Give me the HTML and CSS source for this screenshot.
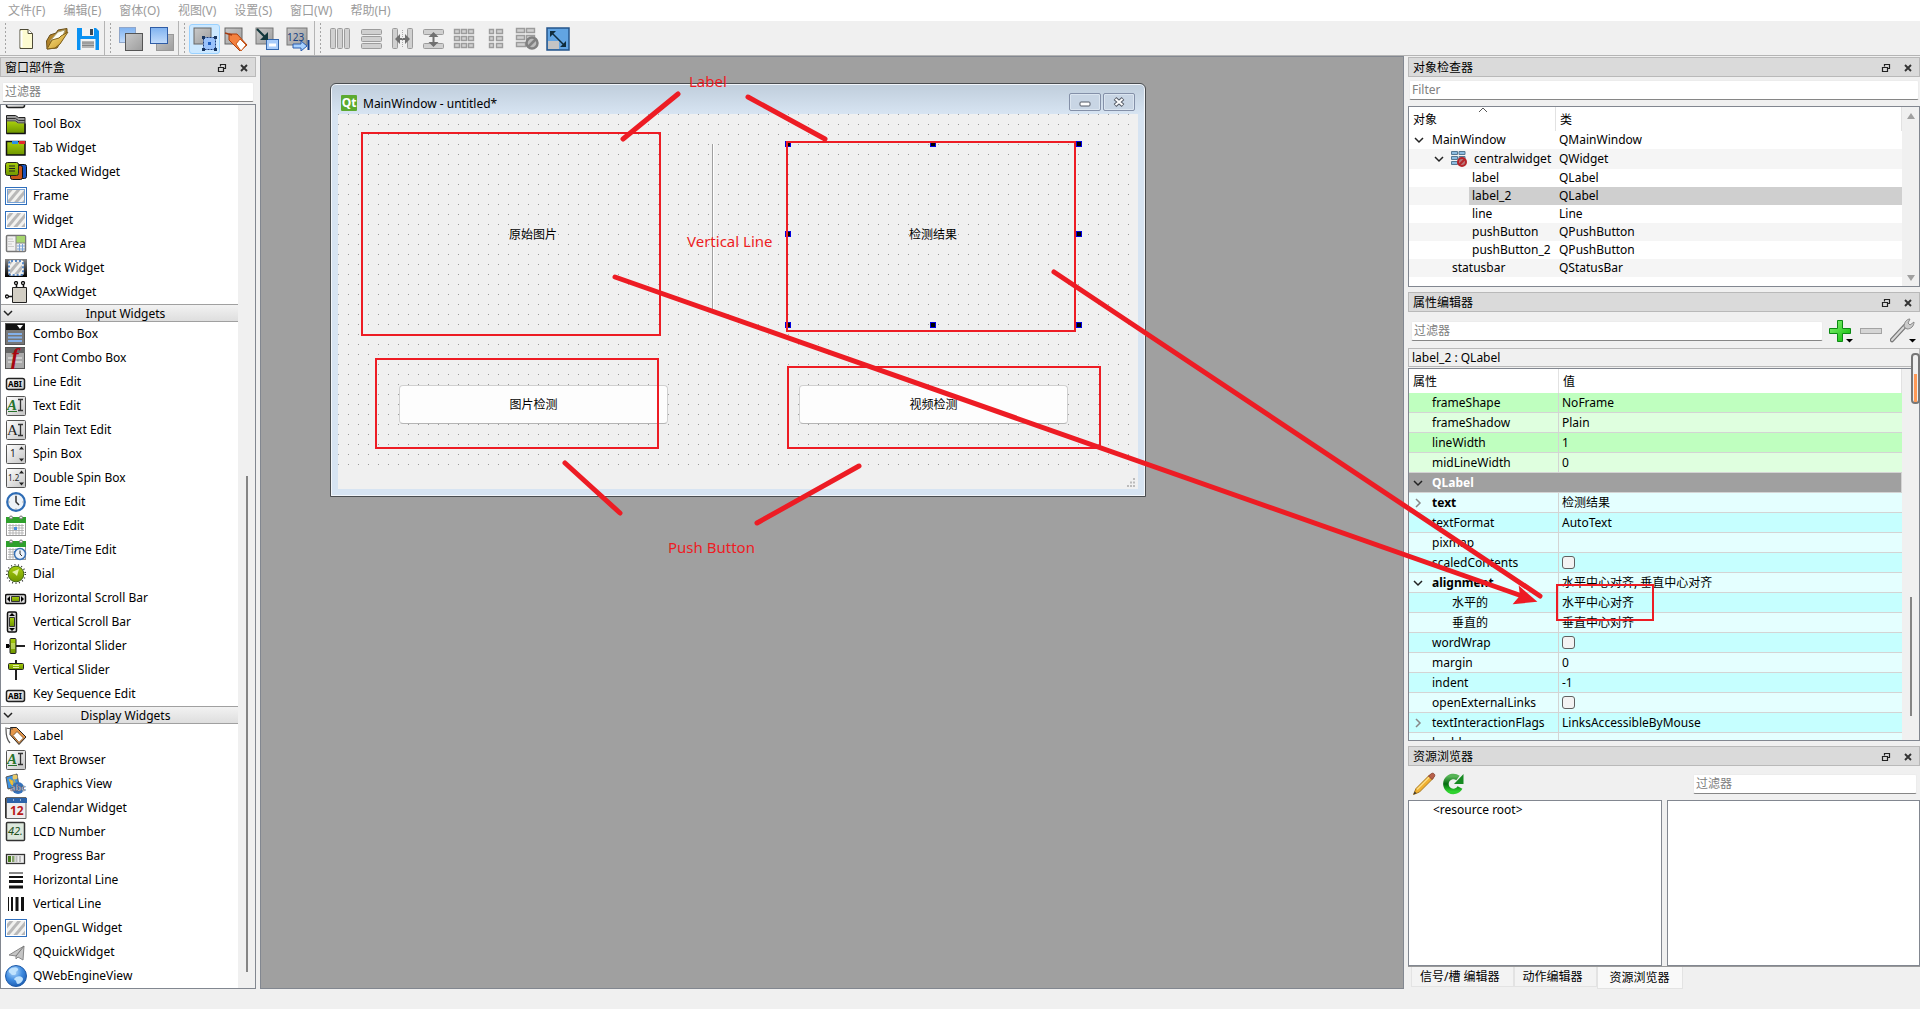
FILE: index.html
```html
<!DOCTYPE html>
<html lang="zh-CN">
<head>
  <meta charset="UTF-8" />
  <meta name="viewport" content="width=device-width, initial-scale=1.0"/>
  <title>Qt Designer</title>
  <link rel="stylesheet" href="styles.css">
</head>
<body>
  <!-- shared gradients -->
  <svg class="gradients" aria-hidden="true">
    <defs>
      <linearGradient id="g-green" x1="0" y1="0" x2="0" y2="1"><stop offset="0" stop-color="#a8ce0c"/><stop offset="1" stop-color="#6f9600"/></linearGradient>
      <linearGradient id="g-grey" x1="0" y1="0" x2="1" y2="1"><stop offset="0" stop-color="#c9c9c9"/><stop offset="1" stop-color="#9d9d9d"/></linearGradient>
      <linearGradient id="g-light" x1="0" y1="0" x2="1" y2="1"><stop offset="0" stop-color="#ffffff"/><stop offset="1" stop-color="#c4c4c4"/></linearGradient>
      <linearGradient id="g-blue" x1="0" y1="0" x2="0" y2="1"><stop offset="0" stop-color="#7fb2f0"/><stop offset="1" stop-color="#c3dcfb"/></linearGradient>
      <linearGradient id="g-plus" x1="0" y1="0" x2="1" y2="1"><stop offset="0" stop-color="#8df57a"/><stop offset="1" stop-color="#05b800"/></linearGradient>
      <linearGradient id="g-dark" x1="0" y1="0" x2="0" y2="1"><stop offset="0" stop-color="#888"/><stop offset="1" stop-color="#000"/></linearGradient>
      <linearGradient id="g-folder" x1="0" y1="0" x2="1" y2="1"><stop offset="0" stop-color="#fae48c"/><stop offset="1" stop-color="#c9951f"/></linearGradient>
      <linearGradient id="g-refresh" x1="0" y1="0" x2="0" y2="1"><stop offset="0" stop-color="#56b356"/><stop offset="0.5" stop-color="#056b10"/><stop offset="1" stop-color="#2fd22f"/></linearGradient>
      <radialGradient id="g-globe" cx="0.4" cy="0.3" r="0.8"><stop offset="0" stop-color="#b9defc"/><stop offset="0.5" stop-color="#3f8be0"/><stop offset="1" stop-color="#1553a8"/></radialGradient>
      <pattern id="p-stripe" width="6" height="6" patternUnits="userSpaceOnUse" patternTransform="rotate(40)"><rect width="6" height="6" fill="#f1f1ef"/><rect width="3" height="6" fill="#b8b8b8"/></pattern>
    </defs>
  </svg>

  <!-- icon sprite -->
  <svg class="sprite" aria-hidden="true">
    <symbol id="i-float" viewBox="0 0 10 10"><path d="M3.5 3.5v-2h5v4h-2M3 1.5h6M1.5 4.500h5v4h-5zM1 4.500h6" fill="none" stroke="#222" stroke-width="1.200"/></symbol>
    <symbol id="i-close" viewBox="0 0 10 10"><path d="M2 2l6 6M8 2l-6 6" stroke="#333" stroke-width="1.900"/></symbol>
    <symbol id="i-down" viewBox="0 0 10 10"><path d="M1 3l4 4 4-4" fill="none" stroke="#222" stroke-width="1.500"/></symbol>
    <symbol id="i-right" viewBox="0 0 10 10"><path d="M3 1l4 4-4 4" fill="none" stroke="#888" stroke-width="1.500"/></symbol>

    <symbol id="t-new" viewBox="0 0 24 24"><path d="M6 2.500h8l4.500 4v15H6z" fill="#fdfbd0" stroke="#4d4a36"/><path d="M14 2.500v4h4.500" fill="#fff" stroke="#4d4a36"/><path d="M7.500 4v16" stroke="#fff" stroke-width="2"/></symbol>
    <symbol id="t-open" viewBox="0 0 24 24"><path d="M1.500 14L5 8l6-2 2-3 9-1.500V5L12 21l-10 1z" fill="#b08228" stroke="#69501c"/><path d="M5 14L13 5l7-2-3 9z" fill="#fdfdf2" stroke="#aaa27a"/><path d="M2 22l5-9 7-2 2-2 7-4-8 12-5 4z" fill="url(#g-folder)" stroke="#80601b"/></symbol>
    <symbol id="t-save" viewBox="0 0 24 24"><path d="M1 1h19l3 3v19H1z" fill="#0a91f2"/><path d="M6 1h12v8H6zM4.500 12h15v11h-15z" fill="#f3f3f3"/><path d="M14 2h3v6h-3z" fill="#3b4854"/><path d="M6 14h12v7H6z" fill="#b5b5b5"/><path d="M6 16h12M6 18.500h12" stroke="#858585"/></symbol>
    <symbol id="t-back" viewBox="0 0 24 24"><rect x=".5" y=".5" width="16" height="15" fill="url(#g-blue)" stroke="#8fa6ca"/><rect x="6.500" y="6.500" width="17" height="17" fill="url(#g-grey)" stroke="#555"/></symbol>
    <symbol id="t-front" viewBox="0 0 24 24"><rect x="6.500" y="7.500" width="17" height="16" fill="url(#g-grey)" stroke="#999"/><rect x=".5" y=".5" width="17" height="16" fill="url(#g-blue)" stroke="#2f5ca5"/></symbol>
    <symbol id="t-edit" viewBox="0 0 24 24"><rect x="1" y="1" width="17" height="16" fill="url(#g-grey)" stroke="#666"/><rect x="10.500" y="10.500" width="12" height="12" fill="#9ac2fb" stroke="#1c3d7d" stroke-dasharray="2 1"/><path d="M9 9h3v3H9zM21 9h3v3h-3zM9 21h3v3H9zM21 21h3v3h-3z" fill="#18355f"/><path d="M15 15h3v3h-3z" fill="#1d5dbf"/></symbol>
    <symbol id="t-tag" viewBox="0 0 24 24"><rect x="1" y="1" width="17" height="16" fill="url(#g-grey)" stroke="#666"/><path d="M5 7h8l10 11-7 6L5 13z" fill="#f3813f" stroke="#b13e0b"/><path d="M16 12l6 6-5 6-5-7z" fill="#fff" stroke="#c85a1c"/><path d="M1 6l7 2" stroke="#a23a10" stroke-width="1.500"/></symbol>
    <symbol id="t-buddy" viewBox="0 0 24 24"><rect x="1" y="1" width="17" height="16" fill="url(#g-grey)" stroke="#777"/><rect x="11.500" y="12.500" width="12" height="10" fill="#a8ccfa" stroke="#3366ab"/><path d="M14 18h7" stroke="#fff" stroke-width="3"/><path d="M2 2l9 9" stroke="#12373c" stroke-width="2.200"/><path d="M13 5v8H5z" fill="#12373c"/></symbol>
    <symbol id="t-order" viewBox="0 0 24 24"><rect x="1" y="1" width="20" height="17" fill="url(#g-grey)" stroke="#777"/><text x="1" y="14" font-size="10" fill="#173f82">123</text><path d="M7 17h8v-3l6 5-6 5v-3H7z" fill="#a8d1ff" stroke="#2a5caf"/><path d="M22.500 13v10" stroke="#153f8b" stroke-width="2"/></symbol>
    <symbol id="t-hlay" viewBox="0 0 24 24"><g fill="#d0d0d0" stroke="#9c9c9c"><rect x="1.500" y="1.500" width="5" height="20" rx="1"/><rect x="8.500" y="1.500" width="5" height="20" rx="1"/><rect x="15.500" y="1.500" width="5" height="20" rx="1"/></g></symbol>
    <symbol id="t-vlay" viewBox="0 0 24 24"><g fill="#d0d0d0" stroke="#9c9c9c"><rect x="1.500" y="2.500" width="20" height="5" rx="1"/><rect x="1.500" y="9.500" width="20" height="5" rx="1"/><rect x="1.500" y="16.500" width="20" height="5" rx="1"/></g></symbol>
    <symbol id="t-hsplit" viewBox="0 0 24 24"><g fill="#d0d0d0" stroke="#9c9c9c"><rect x="1.500" y="1.500" width="5" height="20" rx="1"/><rect x="16.500" y="1.500" width="5" height="20" rx="1"/></g><path d="M4 12l5-5v4h5V7l5 5-5 5v-4H9v4z" fill="#707070"/><path d="M11.500 3v18" stroke="#aaa" stroke-dasharray="1 1"/></symbol>
    <symbol id="t-vsplit" viewBox="0 0 24 24"><g fill="#d0d0d0" stroke="#9c9c9c"><rect x="1.500" y="2.500" width="20" height="5" rx="1"/><rect x="1.500" y="16.500" width="20" height="5" rx="1"/></g><path d="M11.500 5l5 5h-4v5h4l-5 5-5-5h4v-5h-4z" fill="#707070"/></symbol>
    <symbol id="t-grid" viewBox="0 0 24 24"><path d="M1.500 2.500h5v4h-5zM8.500 2.500h5v4h-5zM15.500 2.500h5v4h-5zM1.500 9.500h5v4h-5zM8.500 9.500h5v4h-5zM15.500 9.500h5v4h-5zM1.500 16.500h5v4h-5zM8.500 16.500h5v4h-5zM15.500 16.500h5v4h-5z" fill="#d0d0d0" stroke="#9c9c9c" stroke-width="1.400"/></symbol>
    <symbol id="t-form" viewBox="0 0 24 24"><path d="M5.500 2.500h4v4h-4zM12.500 2.500h6v4h-6zM5.500 9.500h4v4h-4zM12.500 9.500h6v4h-6zM5.500 16.500h4v4h-4zM12.500 16.500h6v4h-6z" fill="#d0d0d0" stroke="#9c9c9c" stroke-width="1.400"/></symbol>
    <symbol id="t-break" viewBox="0 0 24 24"><path d="M1.500 1.500h8v4h-8zM11.500 1.500h8v4h-8zM1.500 8.500h8v4h-8zM11.500 8.500h8v4h-8zM1.500 15.500h9v4h-9z" fill="#d0d0d0" stroke="#9c9c9c" stroke-width="1.400"/><circle cx="17" cy="16" r="5.500" fill="#bbb" stroke="#808080" stroke-width="2.500"/><path d="M13 20l8-8" stroke="#808080" stroke-width="2.500"/></symbol>
    <symbol id="t-adjust" viewBox="0 0 24 24"><rect x="1" y="1" width="22" height="22" fill="#62a4e2" stroke="#24548a" stroke-width="1.500"/><rect x="2" y="14" width="11" height="8" fill="#c4c4c4"/><path d="M6 6l12 12" stroke="#102c3c" stroke-width="1.500"/><path d="M4 4h6l-6 6zM20 20h-6l6-6z" fill="#102c3c"/></symbol>

    <symbol id="w-frame" viewBox="0 0 22 22"><rect x=".5" y="2.500" width="21" height="17" fill="#fff" stroke="#2f6fbd"/><rect x="2.500" y="4.500" width="17" height="13" fill="url(#p-stripe)" stroke="#7aa3d4"/></symbol>
    <symbol id="w-widget" viewBox="0 0 22 22"><rect x=".5" y="2.500" width="21" height="17" fill="#fff" stroke="#2f6fbd"/><rect x="2" y="4" width="18" height="14" fill="url(#p-stripe)"/></symbol>
    <symbol id="w-toolbox" viewBox="0 0 22 22"><path d="M1.500 2.500h9l3 2h6.500v16H1.500z" fill="#999" stroke="#222"/><path d="M1.500 5.500h9l3 2H20M1.500 8h9l3 2H20" fill="none" stroke="#333"/><path d="M2 8.500h8l3 2h6.500V20H2z" fill="url(#g-green)"/><path d="M1.500 20.500H20v-10" fill="none" stroke="#111" stroke-width="1.500"/></symbol>
    <symbol id="w-tab" viewBox="0 0 22 22"><path d="M1.500 4.500H20v13.500H1.500z" fill="url(#g-green)" stroke="#111" stroke-width="1.500"/><path d="M7 4h6v3H7z" fill="#2a91e8"/><path d="M14 4h6v3h-6z" fill="#e3272c"/></symbol>
    <symbol id="w-stack" viewBox="0 0 22 22"><rect x="9.500" y="3.500" width="12" height="14" rx="2" fill="#1853c1" stroke="#111"/><rect x="5.500" y="4.500" width="12" height="14" rx="2" fill="#c5551a" stroke="#111"/><rect x=".5" y="1.500" width="13" height="13" rx="2" fill="url(#g-green)" stroke="#222"/><path d="M4 5h6M4 7.500h6M4 10h6" stroke="#222"/></symbol>
    <symbol id="w-mdi" viewBox="0 0 22 22"><rect x="1.500" y="2.500" width="19" height="16" rx="1" fill="#f2f2f2" stroke="#777" stroke-width="1.500"/><path d="M11 3h9v7h-9z" fill="#a6d56e"/><path d="M11 3v15M11 10h9" stroke="#888"/><path d="M3 6h5M3 8.500h6M3 11h4M3 13.500h6" stroke="#ccc"/><path d="M12 13h8M12 16h8M14.500 11v7M17.500 11v7" stroke="#7ba3d6"/></symbol>
    <symbol id="w-dock" viewBox="0 0 22 22"><rect y="2" width="22" height="18" fill="url(#g-dark)"/><rect x="4" y="4" width="14" height="14" rx="2" fill="url(#p-stripe)" stroke="#fff" stroke-width="1.500"/><rect x="4" y="4" width="14" height="14" rx="2" fill="none" stroke="#2a6abb" stroke-width="1.500" stroke-dasharray="2 2"/></symbol>
    <symbol id="w-ax" viewBox="0 0 22 22"><path d="M7.500 6.500h14v15h-14z" fill="#d2cec4" stroke="#222"/><path d="M11.500 6V3M18.500 6V3M7 15.500H4" stroke="#111" stroke-width="1.500"/><g fill="#fff" stroke="#111" stroke-width="1.300"><circle cx="11" cy="2" r="1.500"/><circle cx="18" cy="2" r="1.500"/><circle cx="2" cy="15.500" r="1.500"/></g></symbol>
    <symbol id="w-combo" viewBox="0 0 22 22"><rect x=".5" y=".5" width="19" height="21" fill="#777" stroke="#555"/><path d="M1 1h19v6H1z" fill="#111"/><path d="M12 2h6l-3 4z" fill="#fff"/><path d="M3 11h14M3 14.500h14M3 18h14" stroke="#83b0ea" stroke-width="2"/></symbol>
    <symbol id="w-font" viewBox="0 0 22 22"><rect x=".5" y=".5" width="19" height="21" fill="#aaa" stroke="#555"/><path d="M1 1h19v5H1z" fill="#666"/><path d="M3 11h14M3 15h14" stroke="#ccc" stroke-width="2"/><text x="6" y="17" font-family="Liberation Serif" font-style="italic" font-weight="bold" font-size="23" fill="#a80710">f</text></symbol>
    <symbol id="w-line" viewBox="0 0 22 22"><rect x="1.500" y="7.500" width="18" height="11" rx="2" fill="url(#g-light)" stroke="#222" stroke-width="1.500"/><text x="3" y="16" font-size="8" font-weight="bold">ABI</text></symbol>
    <symbol id="w-text" viewBox="0 0 22 22"><rect x="1.500" y="1.500" width="19" height="19" rx="1" fill="url(#g-light)" stroke="#555"/><text x="2" y="15" font-family="Liberation Serif" font-size="15" font-style="italic" font-weight="bold" fill="#27722c">A</text><path d="M3 16.500h9" stroke="#27722c"/><path d="M13 4.500h5M13 15.500h5M15.500 5v10" stroke="#333" stroke-width="1.300"/></symbol>
    <symbol id="w-plain" viewBox="0 0 22 22"><rect x="1.500" y="1.500" width="19" height="19" rx="1" fill="url(#g-light)" stroke="#555"/><text x="2" y="16" font-family="Liberation Serif" font-size="15" fill="#222">A</text><path d="M13 5.500h5M13 16.500h5M15.500 6v10" stroke="#333" stroke-width="1.300"/></symbol>
    <symbol id="w-spin" viewBox="0 0 22 22"><rect x="1.500" y="1.500" width="19" height="19" rx="1" fill="url(#g-light)" stroke="#555"/><text x="5" y="14" font-size="10" fill="#222">1</text><path d="M14 6.500l2.500-3 2.500 3zM14 15.500l2.500 3 2.500-3z" fill="#222"/></symbol>
    <symbol id="w-dspin" viewBox="0 0 22 22"><rect x="1.500" y="1.500" width="19" height="19" rx="1" fill="url(#g-light)" stroke="#555"/><text x="3" y="14" font-size="8" fill="#222">1.2</text><path d="M14 6.500l2.500-3 2.500 3zM14 15.500l2.500 3 2.500-3z" fill="#222"/></symbol>
    <symbol id="w-time" viewBox="0 0 22 22"><circle cx="11" cy="11" r="8.800" fill="#eef3f8" stroke="#2e6cb5" stroke-width="2.200"/><path d="M11 5v6l3 3" fill="none" stroke="#333" stroke-width="1.500"/><path d="M11 3.500v1M11 17.500v1M3.500 11h1M17.500 11h1" stroke="#777"/></symbol>
    <symbol id="w-date" viewBox="0 0 22 22"><rect x="1.500" y="3.500" width="19" height="17" fill="#fff" stroke="#999"/><path d="M1 2h20v6H1z" fill="#2fa02c"/><g fill="#eee" stroke="#777"><circle cx="6" cy="2.500" r="1.500"/><circle cx="16" cy="2.500" r="1.500"/></g><path d="M3 10.500h16M3 13h16M3 15.500h16M3 18h16M5 9v11M8 9v11M11 9v11M14 9v11M17 9v11" stroke="#aaa" stroke-width=".8"/><path d="M9 12h3v3H9z" fill="#4c8fe0"/></symbol>
    <symbol id="w-datetime" viewBox="0 0 22 22"><use href="#w-date"/><circle cx="15" cy="15" r="5.500" fill="#edf3fa" stroke="#3a72b5" stroke-width="1.500"/><path d="M15 11.500V15l2 2" fill="none" stroke="#333"/></symbol>
    <symbol id="w-dial" viewBox="0 0 22 22"><circle cx="11" cy="11" r="9.300" fill="none" stroke="#333" stroke-width="1.500" stroke-dasharray="1 2.500"/><circle cx="11" cy="11" r="7.800" fill="url(#g-green)" stroke="#446a12"/><path d="M7 9l7-3-2 7-2-2z" fill="#e3f2a4"/></symbol>
    <symbol id="w-hscroll" viewBox="0 0 22 22"><rect x=".5" y="7.500" width="20" height="9" rx="1.500" fill="#ddd" stroke="#111" stroke-width="1.500"/><path d="M5 9v6l-3-3zM16 9v6l3-3z"/><path d="M6.500 9.500h8v5h-8z" fill="url(#g-green)" stroke="#333"/></symbol>
    <symbol id="w-vscroll" viewBox="0 0 22 22"><rect x="2.500" y="1" width="9" height="20" rx="1.500" fill="#ddd" stroke="#111" stroke-width="1.500"/><path d="M4 5h6L7 2zM4 17h6l-3 3z"/><path d="M4.500 6.500h5v9h-5z" fill="url(#g-green)" stroke="#333"/></symbol>
    <symbol id="w-hslider" viewBox="0 0 22 22"><path d="M1 11h19" stroke="#222" stroke-width="2"/><path d="M1 9h3v4H1z"/><rect x="5" y="3.500" width="6" height="15" rx="1" fill="url(#g-green)" stroke="#222"/><path d="M7 8v6M9 8v6" stroke="#e3f2a4"/></symbol>
    <symbol id="w-vslider" viewBox="0 0 22 22"><path d="M11 1v20" stroke="#222" stroke-width="2"/><rect x="3.500" y="4.500" width="15" height="6" rx="1" fill="url(#g-green)" stroke="#222"/><path d="M8 6.500h6M8 8.500h6" stroke="#e3f2a4"/></symbol>
    <symbol id="w-label" viewBox="0 0 22 22"><path d="M5.500 2.500h6L21 12l-7 7.500-9-10z" fill="#e5974a" stroke="#222"/><path d="M12 6.500l6.500 6.500-4.500 4.500-6-7z" fill="#fff" stroke="#8a5a2b"/><path d="M0 3l8 1M1 4c0 7 1 11 4 14" fill="none" stroke="#555" stroke-width="1.200"/></symbol>
    <symbol id="w-graphics" viewBox="0 0 22 22"><path d="M1 4l11-3 2 12L3 16z" fill="#3b93e5" stroke="#555"/><path d="M4 6l4 2v5l-2-2zM8 5l3 6" fill="#f2c53d" stroke="#d8b03a"/><circle cx="10" cy="4" r="2.500" fill="#e8c96a"/><circle cx="13" cy="15" r="6" fill="#3572bb"/><text x="5" y="18" font-size="9" font-weight="bold" fill="#c9d3de" stroke="#445" stroke-width=".4">abc</text></symbol>
    <symbol id="w-calendar" viewBox="0 0 22 22"><path d="M1 .5h20v21H1z" fill="#eee" stroke="#666"/><path d="M2 1h20v5H2z" fill="#2b63aa"/><path d="M.8 1v20" stroke="#333" stroke-width="1.600"/><path d="M8 3h1M15 3h1" stroke="#fff"/><text x="5" y="18" font-size="12" font-weight="bold" fill="#b81a1a">12</text></symbol>
    <symbol id="w-lcd" viewBox="0 0 22 22"><rect x="1.500" y="1.500" width="18" height="18" rx="1" fill="#dde8dd" stroke="#333" stroke-width="1.500"/><text x="3" y="14" font-size="11" font-style="italic" fill="#204f1c">42.</text></symbol>
    <symbol id="w-progress" viewBox="0 0 22 22"><rect x="1.500" y="9.500" width="18" height="9" fill="#eee" stroke="#333" stroke-width="1.300"/><path d="M3 11h3v6H3z" fill="#47791c"/><path d="M7 11h2.500v6H7z" fill="#84a06b"/><path d="M10.500 11h2v6h-2zM14 11h2v6h-2z" fill="#bbb"/></symbol>
    <symbol id="w-hline" viewBox="0 0 22 22"><path d="M4 4h14" stroke="#111" stroke-width="1"/><path d="M4 8h14" stroke="#111" stroke-width="2"/><path d="M4 12.500h14M4 18h14" stroke="#111" stroke-width="3"/></symbol>
    <symbol id="w-vline" viewBox="0 0 22 22"><path d="M3.500 4v14" stroke="#111" stroke-width="1"/><path d="M7 4v14" stroke="#111" stroke-width="2"/><path d="M12 4v14M17.500 4v14" stroke="#111" stroke-width="3"/></symbol>
    <symbol id="w-quick" viewBox="0 0 22 22"><path d="M4 14L19 5l-1 14-5-3-2 2v-3z" fill="#c5c5c5" stroke="#888"/><path d="M19 5l-8 10" stroke="#777"/></symbol>
    <symbol id="w-web" viewBox="0 0 22 22"><circle cx="11" cy="11" r="10.500" fill="url(#g-globe)" stroke="#1f5ba8"/><path d="M4 5c3-3 8-3 9-1s-3 2-2 4-4 3-5 1-3-1-2-4zM11 12c4-2 7 0 7 2s-3 5-5 5-1-3-3-4 0-2 1-3z" fill="#bfe2fd"/></symbol>
  </svg>

  <div class="designer">
    <nav class="menubar">
      <button>文件(F)</button>
      <button>编辑(E)</button>
      <button>窗体(O)</button>
      <button>视图(V)</button>
      <button>设置(S)</button>
      <button>窗口(W)</button>
      <button>帮助(H)</button>
    </nav>

    <div class="toolbar">
      <div class="tool-group">
        <button aria-label="新建"><svg><use href="#t-new"/></svg></button>
        <button aria-label="打开"><svg><use href="#t-open"/></svg></button>
        <button aria-label="保存"><svg><use href="#t-save"/></svg></button>
      </div>
      <div class="tool-group">
        <button aria-label="放到后面"><svg><use href="#t-back"/></svg></button>
        <button aria-label="放到前面"><svg><use href="#t-front"/></svg></button>
      </div>
      <div class="tool-group">
        <button class="active" aria-label="编辑控件"><svg><use href="#t-edit"/></svg></button>
        <button aria-label="编辑信号/槽"><svg><use href="#t-tag"/></svg></button>
        <button aria-label="编辑伙伴"><svg><use href="#t-buddy"/></svg></button>
        <button aria-label="编辑Tab顺序"><svg><use href="#t-order"/></svg></button>
      </div>
      <div class="tool-group">
        <button aria-label="水平布局"><svg><use href="#t-hlay"/></svg></button>
        <button aria-label="垂直布局"><svg><use href="#t-vlay"/></svg></button>
        <button aria-label="水平分裂器"><svg><use href="#t-hsplit"/></svg></button>
        <button aria-label="垂直分裂器"><svg><use href="#t-vsplit"/></svg></button>
        <button aria-label="栅格布局"><svg><use href="#t-grid"/></svg></button>
        <button aria-label="表单布局"><svg><use href="#t-form"/></svg></button>
        <button aria-label="打破布局"><svg><use href="#t-break"/></svg></button>
        <button aria-label="调整大小"><svg><use href="#t-adjust"/></svg></button>
      </div>
    </div>

    <main class="workspace">
      <!-- widget box -->
      <aside class="dock dock-left">
        <div class="dock-title">
          <span>窗口部件盒</span>
          <button aria-label="浮动"><svg><use href="#i-float"/></svg></button>
          <button aria-label="关闭"><svg><use href="#i-close"/></svg></button>
        </div>
        <input class="filter widget-filter" type="text" placeholder="过滤器" aria-label="过滤器">
        <div class="widget-box">
          <div class="widget-list">
            <ul>
              <li class="scrolled"><svg><use href="#w-line"/></svg></li>
              <li><svg><use href="#w-toolbox"/></svg>Tool Box</li>
              <li><svg><use href="#w-tab"/></svg>Tab Widget</li>
              <li><svg><use href="#w-stack"/></svg>Stacked Widget</li>
              <li><svg><use href="#w-frame"/></svg>Frame</li>
              <li><svg><use href="#w-widget"/></svg>Widget</li>
              <li><svg><use href="#w-mdi"/></svg>MDI Area</li>
              <li><svg><use href="#w-dock"/></svg>Dock Widget</li>
              <li><svg><use href="#w-ax"/></svg>QAxWidget</li>
            </ul>
            <button class="category"><svg><use href="#i-down"/></svg><span>Input Widgets</span></button>
            <ul>
              <li><svg><use href="#w-combo"/></svg>Combo Box</li>
              <li><svg><use href="#w-font"/></svg>Font Combo Box</li>
              <li><svg><use href="#w-line"/></svg>Line Edit</li>
              <li><svg><use href="#w-text"/></svg>Text Edit</li>
              <li><svg><use href="#w-plain"/></svg>Plain Text Edit</li>
              <li><svg><use href="#w-spin"/></svg>Spin Box</li>
              <li><svg><use href="#w-dspin"/></svg>Double Spin Box</li>
              <li><svg><use href="#w-time"/></svg>Time Edit</li>
              <li><svg><use href="#w-date"/></svg>Date Edit</li>
              <li><svg><use href="#w-datetime"/></svg>Date/Time Edit</li>
              <li><svg><use href="#w-dial"/></svg>Dial</li>
              <li><svg><use href="#w-hscroll"/></svg>Horizontal Scroll Bar</li>
              <li><svg><use href="#w-vscroll"/></svg>Vertical Scroll Bar</li>
              <li><svg><use href="#w-hslider"/></svg>Horizontal Slider</li>
              <li><svg><use href="#w-vslider"/></svg>Vertical Slider</li>
              <li><svg><use href="#w-line"/></svg>Key Sequence Edit</li>
            </ul>
            <button class="category"><svg><use href="#i-down"/></svg><span>Display Widgets</span></button>
            <ul>
              <li><svg><use href="#w-label"/></svg>Label</li>
              <li><svg><use href="#w-text"/></svg>Text Browser</li>
              <li><svg><use href="#w-graphics"/></svg>Graphics View</li>
              <li><svg><use href="#w-calendar"/></svg>Calendar Widget</li>
              <li><svg><use href="#w-lcd"/></svg>LCD Number</li>
              <li><svg><use href="#w-progress"/></svg>Progress Bar</li>
              <li><svg><use href="#w-hline"/></svg>Horizontal Line</li>
              <li><svg><use href="#w-vline"/></svg>Vertical Line</li>
              <li><svg><use href="#w-widget"/></svg>OpenGL Widget</li>
              <li><svg><use href="#w-quick"/></svg>QQuickWidget</li>
              <li><svg><use href="#w-web"/></svg>QWebEngineView</li>
            </ul>
          </div>
          <div class="track"><div class="thumb thumb-widgets"></div></div>
        </div>
      </aside>

      <!-- form editor -->
      <section class="mdi">
        <div class="form-window">
          <div class="form-title">
            <span class="qt-logo">Qt</span>
            <span class="form-name">MainWindow - untitled*</span>
            <button aria-label="最小化"><svg viewBox="0 0 12 12"><rect x="1" y="6" width="10" height="4" rx="1" fill="#fff" stroke="#555b66"/></svg></button>
            <button aria-label="关闭"><svg viewBox="0 0 12 12"><path d="M2 2.500l8 7M10 2.500l-8 7" stroke="#555b66" stroke-width="4"/><path d="M2.500 3l7 6M9.500 3l-7 6" stroke="#fff" stroke-width="2"/></svg></button>
          </div>
          <div class="form-body">
            <div class="form-canvas">
              <div class="form-label label-1">原始图片</div>
              <div class="form-label label-2">检测结果
                <i class="handle tl"></i><i class="handle tc"></i><i class="handle tr"></i>
                <i class="handle ml"></i><i class="handle mr"></i>
                <i class="handle bl"></i><i class="handle bc"></i><i class="handle br"></i>
              </div>
              <div class="form-line"></div>
              <button class="push push-1">图片检测</button>
              <button class="push push-2">视频检测</button>
            </div>
            <svg class="grip" viewBox="0 0 10 10"><path d="M7 0h2v2H7zM4 3.500h2v2H4zM7 3.500h2v2H7zM1 7h2v2H1zM4 7h2v2H4zM7 7h2v2H7z" fill="#bbb"/></svg>
          </div>
        </div>
      </section>

      <aside class="dock dock-right">
        <!-- object inspector -->
        <div class="dock-title">
          <span>对象检查器</span>
          <button aria-label="浮动"><svg><use href="#i-float"/></svg></button>
          <button aria-label="关闭"><svg><use href="#i-close"/></svg></button>
        </div>
        <input class="filter object-filter" type="text" placeholder="Filter" aria-label="Filter">
        <div class="panel inspector">
          <table class="objects">
            <colgroup><col class="col-object"><col></colgroup>
            <thead>
              <tr><th>对象<svg class="sort" viewBox="0 0 10 6"><path d="M1 5l4-4 4 4" fill="none" stroke="#555"/></svg></th><th>类</th></tr>
            </thead>
            <tbody>
              <tr><td><div class="node"><svg><use href="#i-down"/></svg>MainWindow</div></td><td>QMainWindow</td></tr>
              <tr class="tall"><td><div class="node level-1"><svg><use href="#i-down"/></svg>
                <svg class="node-icon" viewBox="0 0 16 16"><path d="M.5.500h6v3h-6zM8 .5h6v3H8zM.5 5.500h6v3h-6zM8 5.500h6v3H8zM.5 10.500h6v3h-6z" fill="#8dbce0" stroke="#557893"/><circle cx="11" cy="11" r="4" fill="#b9797b" stroke="#b7252a" stroke-width="2"/><path d="M8 14l6-6" stroke="#b7252a" stroke-width="2"/></svg>centralwidget</div></td><td>QWidget</td></tr>
              <tr><td><div class="node level-2">label</div></td><td>QLabel</td></tr>
              <tr class="selected"><td><div class="node level-2">label_2</div></td><td>QLabel</td></tr>
              <tr><td><div class="node level-2">line</div></td><td>Line</td></tr>
              <tr><td><div class="node level-2">pushButton</div></td><td>QPushButton</td></tr>
              <tr><td><div class="node level-2">pushButton_2</div></td><td>QPushButton</td></tr>
              <tr><td><div class="node level-1 leaf">statusbar</div></td><td>QStatusBar</td></tr>
            </tbody>
          </table>
          <div class="track arrows">
            <svg viewBox="0 0 10 8"><path d="M1 7h8L5 1z" fill="#a0a0a0"/></svg>
            <svg viewBox="0 0 10 8"><path d="M1 1h8L5 7z" fill="#a0a0a0"/></svg>
          </div>
        </div>

        <!-- property editor -->
        <div class="dock-title">
          <span>属性编辑器</span>
          <button aria-label="浮动"><svg><use href="#i-float"/></svg></button>
          <button aria-label="关闭"><svg><use href="#i-close"/></svg></button>
        </div>
        <div class="property-tools">
          <input class="filter" type="text" placeholder="过滤器" aria-label="过滤器">
          <button aria-label="添加"><svg viewBox="0 0 26 26"><path d="M9.500 2.500h5v8h8v5h-8v8h-5v-8h-8v-5h8z" fill="url(#g-plus)" stroke="#0b8a12"/><path d="M18 21h7l-3.500 3.500z"/></svg></button>
          <button aria-label="删除"><svg viewBox="0 0 26 26"><rect x="1.500" y="10.500" width="21" height="5" fill="#d5d5d5" stroke="#a3a3a3"/></svg></button>
          <button aria-label="配置"><svg viewBox="0 0 26 26"><path d="M2 22L15 8" stroke="#777" stroke-width="4.500" stroke-linecap="round"/><path d="M2 22L15 8" stroke="#d8d8d8" stroke-width="2" stroke-linecap="round"/><path d="M14 9c0-5 3-8 6-8l-2 4 2 2 4-3c0 4-3 7-7 7z" fill="#ccc" stroke="#888"/><path d="M19 21h7l-3.500 3.500z"/></svg></button>
        </div>
        <div class="object-name">label_2 : QLabel</div>
        <div class="panel properties">
          <div class="props-view">
            <table class="props">
              <colgroup><col class="col-prop"><col></colgroup>
              <thead><tr><th>属性</th><th>值</th></tr></thead>
              <tbody>
                <tr class="green"><td>frameShape</td><td>NoFrame</td></tr>
                <tr class="green light"><td>frameShadow</td><td>Plain</td></tr>
                <tr class="green"><td>lineWidth</td><td>1</td></tr>
                <tr class="green light"><td>midLineWidth</td><td>0</td></tr>
                <tr class="section"><td colspan="2"><svg><use href="#i-down"/></svg>QLabel</td></tr>
                <tr class="light"><td class="changed"><svg><use href="#i-right"/></svg>text</td><td>检测结果</td></tr>
                <tr><td>textFormat</td><td>AutoText</td></tr>
                <tr class="light"><td>pixmap</td><td></td></tr>
                <tr><td><label for="scaled">scaledContents</label></td><td><input type="checkbox" id="scaled"></td></tr>
                <tr class="light"><td class="changed"><svg><use href="#i-down"/></svg>alignment</td><td>水平中心对齐, 垂直中心对齐</td></tr>
                <tr><td class="sub">水平的</td><td>水平中心对齐</td></tr>
                <tr class="light"><td class="sub">垂直的</td><td>垂直中心对齐</td></tr>
                <tr><td><label for="wrap">wordWrap</label></td><td><input type="checkbox" id="wrap"></td></tr>
                <tr class="light"><td>margin</td><td>0</td></tr>
                <tr><td>indent</td><td>-1</td></tr>
                <tr class="light"><td><label for="links">openExternalLinks</label></td><td><input type="checkbox" id="links"></td></tr>
                <tr><td><svg><use href="#i-right"/></svg>textInteractionFlags</td><td>LinksAccessibleByMouse</td></tr>
                <tr class="light"><td>buddy</td><td></td></tr>
              </tbody>
            </table>
          </div>
          <div class="track"><div class="thumb thumb-props"></div></div>
          <div class="meter"><div class="meter-fill"></div></div>
        </div>

        <!-- resource browser -->
        <div class="dock-title">
          <span>资源浏览器</span>
          <button aria-label="浮动"><svg><use href="#i-float"/></svg></button>
          <button aria-label="关闭"><svg><use href="#i-close"/></svg></button>
        </div>
        <div class="resource-tools">
          <button aria-label="编辑资源"><svg viewBox="0 0 24 24"><path d="M1.500 22.500l2.500-6L17.500 3l3.500 3.500L7.500 20z" fill="#f0b030" stroke="#a87920"/><path d="M5 17.500L18 4.500" stroke="#fbdc85" stroke-width="1.500"/><path d="M16.500 4l3-2.500c2-1 4 1 3 3L20 7.500z" fill="#b8604a" stroke="#8d4636"/><path d="M1.500 22.500l1.200-3 1.800 1.800z" fill="#333"/></svg></button>
          <button aria-label="重新加载"><svg viewBox="0 0 24 24"><path d="M18 15.500A7.500 7.500 0 1 1 16 6" fill="none" stroke="url(#g-refresh)" stroke-width="5.500"/><path d="M21.500 2v10H12z" fill="#178a22"/></svg></button>
          <input class="filter" type="text" placeholder="过滤器" aria-label="过滤器">
        </div>
        <div class="resource-panes">
          <div class="pane">&lt;resource root&gt;</div>
          <div class="pane"></div>
        </div>
        <div class="tabs" role="tablist">
          <button role="tab">信号/槽 编辑器</button>
          <button role="tab">动作编辑器</button>
          <button role="tab" class="current" aria-selected="true">资源浏览器</button>
        </div>
      </aside>
    </main>
    <footer class="statusbar"></footer>
  </div>

  <!-- red notes drawn over the editor -->
  <svg class="notes">
    <g class="note-box">
      <rect x="362" y="133" width="298" height="202"/>
      <rect x="787" y="142" width="288" height="189"/>
      <rect x="376" y="359" width="282" height="89"/>
      <rect x="788" y="367" width="312" height="81"/>
      <rect x="1557" y="585" width="96" height="35"/>
    </g>
    <g class="note-line">
      <path d="M678 94L623 139M748 97L825 139M565 463L620 513M859 466L757 523"/>
      <path d="M615 277L1522 596M1054 272L1540 596"/>
    </g>
    <path class="note-head" d="M1535 601l-15-13 1 8-6 7z"/>
    <text x="689" y="87">Label</text>
    <text x="687" y="247">Vertical Line</text>
    <text x="668" y="553">Push Button</text>
  </svg>
</body>
</html>
```
FILE: styles.css
```css
* {
  box-sizing: border-box;
}
body {
  margin: 0;
  font-family: "Noto Sans", "Noto Sans CJK SC", sans-serif;
  font-size: 12px;
  line-height: 18px;
  color: #000;
  background-color: #f0f0f0;
}
button, input {
  font: inherit;
  color: inherit;
}
button {
  padding: 0;
  border: none;
  background: none;
}
ul {
  list-style: none;
  margin: 0;
  padding: 0;
}
svg {
  display: block;
  flex: none;
}
.gradients {
  position: absolute;
  width: 0;
  height: 0;
}
.sprite {
  display: none;
}
.designer {
  display: flex;
  flex-direction: column;
  height: 100vh;
  overflow: hidden;
}

/* menu and toolbar */
.menubar {
  display: flex;
  gap: 2px;
  height: 21px;
  background-color: #fff;
}
.menubar button {
  padding: 0 8px;
  color: #9b9b9b;
}
.toolbar {
  display: flex;
  height: 35px;
  border-bottom: 1px solid #b4b4b4;
}
.tool-group {
  display: flex;
  align-items: center;
  padding: 2px 1px 0 10px;
  border-right: 1px solid #b4b4b4;
  background: radial-gradient(circle, #a5a5a5 1px, transparent 1px) 4px 5px / 3px 4px repeat-y;
}
.tool-group:last-child {
  border-right: none;
}
.tool-group button {
  display: flex;
  align-items: center;
  justify-content: center;
  width: 31px;
  height: 30px;
}
.tool-group svg {
  width: 24px;
  height: 24px;
}
.tool-group .active {
  background-color: #cce8ff;
  border: 1px solid #99d1ff;
  border-radius: 3px;
}

/* docks */
.workspace {
  display: flex;
  flex: 1;
  gap: 4px;
  min-height: 0;
}
.dock {
  display: flex;
  flex-direction: column;
  flex: none;
  padding-top: 1px;
}
.dock-left {
  width: 256px;
}
.dock-right {
  width: 512px;
}
.dock-title {
  display: flex;
  align-items: center;
  flex: none;
  height: 20px;
  padding: 2px 0 0 4px;
  background-color: #dadada;
  border: 1px solid #b9b9b9;
}
.dock-title span {
  flex: 1;
}
.dock-title button {
  display: flex;
  justify-content: center;
  width: 22px;
}
.dock-title svg {
  width: 10px;
  height: 10px;
}
.filter {
  flex: none;
  height: 20px;
  min-width: 0;
  padding: 0 2px 2px;
  background-color: #fff;
  border: 1px solid #ececec;
  border-bottom-color: #868686;
  border-radius: 2px;
  outline: none;
}
.filter::placeholder {
  color: #808080;
  opacity: 1;
}
.widget-filter {
  margin: 5px 2px 2px;
}
.track {
  flex: none;
  width: 17px;
  background-color: #f0f0f0;
}
.thumb {
  width: 2px;
  margin-left: 8px;
  background-color: #858585;
}

/* widget box */
.widget-box {
  display: flex;
  flex: 1;
  min-height: 0;
  border: 1px solid #828790;
  background-color: #fff;
}
.widget-list {
  display: flex;
  flex-direction: column;
  justify-content: flex-end;
  flex: 1;
  overflow: hidden;
}
.widget-list li {
  display: flex;
  align-items: center;
  gap: 6px;
  height: 24px;
  padding-left: 4px;
}
.widget-list li svg {
  width: 22px;
  height: 22px;
}
.category {
  display: flex;
  align-items: center;
  flex: none;
  height: 18px;
  padding-left: 2px;
  border-top: 1px solid #a0a0a0;
  border-bottom: 1px solid #a0a0a0;
  background: linear-gradient(#f2f2f2, #dedede);
}
.category svg {
  width: 10px;
  height: 10px;
}
.category span {
  flex: 1;
  padding-top: 2px;
}
.thumb-widgets {
  height: 496px;
  margin-top: 371px;
}

/* form editor */
.mdi {
  position: relative;
  flex: 1;
  min-width: 0;
  overflow: hidden;
  background-color: #a0a0a0;
  border: 1px solid #828790;
}
.form-window {
  position: absolute;
  left: 69px;
  top: 26px;
  width: 816px;
  height: 414px;
  padding: 0 7px 7px;
  border: 1px solid #4a4d50;
  border-radius: 6px 6px 0 0;
  box-shadow: inset 0 0 0 1px #f2f6fb;
  background: linear-gradient(#bfcddb, #d7e4f2 30px);
}
.form-title {
  display: flex;
  align-items: center;
  gap: 2px;
  height: 30px;
  padding: 6px 3px 0;
}
.qt-logo {
  width: 16px;
  height: 16px;
  margin: 2px 4px 0 0;
  border-radius: 1px;
  background-color: #5caa30;
  color: #fff;
  font-weight: bold;
  line-height: 15px;
  text-align: center;
}
.form-name {
  flex: 1;
  margin-top: 4px;
}
.form-title button {
  display: flex;
  align-items: center;
  justify-content: center;
  width: 32px;
  height: 18px;
  border: 1px solid #8490a8;
  border-radius: 2px;
  background-color: #c8d5e4;
  box-shadow: inset 0 0 0 1px #dbe5f0;
}
.form-title svg {
  width: 12px;
  height: 12px;
}
.form-body {
  position: relative;
  height: 375px;
  background-color: #f0f0f0;
}
.form-canvas {
  position: relative;
  height: 353px;
  background: conic-gradient(from 270deg at 1px 1px, #999 90deg, transparent 0) 0 0 / 10px 10px;
}
.form-label {
  position: absolute;
  top: 30px;
  width: 290px;
  height: 181px;
  line-height: 181px;
  text-align: center;
}
.label-1 {
  left: 50px;
}
.label-2 {
  left: 450px;
}
.handle {
  position: absolute;
  width: 6px;
  height: 6px;
  border: 1px solid #0000e0;
  background-color: #000;
}
.tl, .tc, .tr { top: -3px; }
.ml, .mr { top: 87px; }
.bl, .bc, .br { bottom: -3px; }
.tl, .ml, .bl { left: -3px; }
.tc, .bc { left: 142px; }
.tr, .mr, .br { right: -4px; }
.form-line {
  position: absolute;
  left: 374px;
  top: 30px;
  width: 2px;
  height: 166px;
  background-color: #a0a0a0;
  border-right: 1px solid #fff;
}
.push {
  position: absolute;
  top: 271px;
  width: 269px;
  height: 39px;
  border: 1px solid #d0d0d0;
  border-bottom-color: #b5b5b5;
  border-radius: 4px;
  background-color: #fdfdfd;
}
.push-1 {
  left: 61px;
}
.push-2 {
  left: 461px;
}
.grip {
  position: absolute;
  right: 2px;
  bottom: 1px;
  width: 10px;
  height: 10px;
}

/* object inspector */
.object-filter {
  margin: 3px 1px 6px;
}
.panel {
  position: relative;
  display: flex;
  margin-bottom: 5px;
  border: 1px solid #828790;
  background-color: #fff;
}
.panel .track {
  margin-left: auto;
}
table {
  flex: 1;
  table-layout: fixed;
  border-spacing: 0;
  align-self: flex-start;
}
th, td {
  padding: 0;
  text-align: left;
  font-weight: normal;
  white-space: nowrap;
}
th {
  position: relative;
  height: 24px;
  padding: 2px 4px 0;
  border-right: 1px solid #e2e2e2;
}
.inspector {
  flex: none;
  height: 181px;
}
.col-object {
  width: 147px;
}
.objects td {
  height: 18px;
  line-height: 16px;
}
.objects td + td {
  padding-left: 3px;
}
.objects .tall td {
  height: 20px;
}
.objects tbody tr:nth-child(even) {
  background-color: #f5f5f5;
}
.node {
  display: flex;
  align-items: center;
  gap: 8px;
  padding-left: 5px;
}
.node svg {
  width: 10px;
  height: 10px;
}
.node .node-icon {
  width: 16px;
  height: 16px;
}
.level-1 {
  gap: 7px;
  padding-left: 25px;
}
.leaf {
  padding-left: 43px;
}
.level-2 {
  padding-left: 63px;
}
.objects .selected td {
  background: linear-gradient(#cfcfcf, #cfcfcf) 60px 0 no-repeat;
}
.objects .selected td + td {
  background-color: #cfcfcf;
}
.sort {
  position: absolute;
  left: 69px;
  top: 0;
  width: 10px;
  height: 6px;
}
.arrows {
  display: flex;
  flex-direction: column;
  align-items: center;
  justify-content: space-between;
  padding: 5px 0 4px;
}
.arrows svg {
  width: 10px;
  height: 8px;
}

/* property editor */
.property-tools {
  display: flex;
  align-items: center;
  gap: 5px;
  flex: none;
  height: 36px;
  padding: 2px 4px 0 3px;
}
.property-tools .filter {
  flex: 1;
}
.property-tools svg {
  width: 26px;
  height: 26px;
}
.object-name {
  flex: none;
  height: 19px;
  margin-bottom: 1px;
  padding: 0 3px;
  border: 1px solid #b9b9b9;
}
.properties {
  flex: 1;
  min-height: 0;
}
.props-view {
  flex: 1;
  overflow: hidden;
}
.props {
  width: 100%;
}
.col-prop {
  width: 150px;
}
.props td {
  position: relative;
  height: 20px;
  padding-left: 23px;
  border-right: 1px solid #d4d4d4;
  border-bottom: 1px solid #d4d4d4;
  background-color: #c6ffff;
}
.props td + td {
  padding-left: 3px;
  border-right: none;
}
.props .light td {
  background-color: #e4ffff;
}
.props .green td {
  background-color: #bfffbf;
}
.props .green.light td {
  background-color: #dfffdf;
}
.props .section td {
  background-color: #a0a0a0;
  color: #fff;
  font-weight: bold;
}
.props .changed {
  font-weight: bold;
}
.props .sub {
  padding-left: 43px;
}
.props td svg {
  position: absolute;
  left: 4px;
  top: 5px;
  width: 10px;
  height: 10px;
}
.props input {
  display: block;
  appearance: none;
  width: 13px;
  height: 13px;
  margin: 0;
  border: 1px solid #606060;
  border-radius: 3px;
  background-color: #f3f3f3;
}
.thumb-props {
  height: 119px;
  margin-top: 228px;
}
.meter {
  position: absolute;
  right: -1px;
  top: -16px;
  width: 9px;
  height: 51px;
  padding: 19px 1px 0;
  border: 2px solid #777;
  border-radius: 4px;
  background-color: #f0f0f0;
}
.meter-fill {
  height: 28px;
  background-color: #ff9a57;
}

/* resource browser */
.resource-tools {
  display: flex;
  align-items: center;
  gap: 6px;
  flex: none;
  height: 34px;
  padding: 2px 3px 0 4px;
}
.resource-tools svg {
  width: 24px;
  height: 24px;
}
.resource-tools .filter {
  width: 224px;
  margin-left: auto;
}
.resource-panes {
  display: flex;
  gap: 5px;
  flex: none;
  height: 166px;
}
.pane {
  flex: 1;
  padding: 0 24px;
  border: 1px solid #828790;
  background-color: #fff;
}
.tabs {
  display: flex;
  align-items: flex-start;
  flex: none;
  height: 23px;
  padding-left: 3px;
  border-top: 1px solid #999;
}
.tabs button {
  height: 20px;
  padding: 0 13px 0 8px;
  border: 1px solid #e3e3e3;
  border-top: none;
  background-color: #f3f3f3;
}
.tabs .current {
  height: 22px;
  padding: 0 12px;
  background-color: #f9f9f9;
}
.statusbar {
  flex: none;
  height: 20px;
}

/* notes */
.notes {
  position: absolute;
  left: 0;
  top: 0;
  width: 100%;
  height: 100%;
  pointer-events: none;
}
.note-box {
  fill: none;
  stroke: #ed1c24;
  stroke-width: 2;
}
.note-line {
  fill: none;
  stroke: #ed1c24;
  stroke-width: 5;
  stroke-linecap: round;
}
.note-head {
  fill: #ed1c24;
  stroke: #ed1c24;
  stroke-width: 2;
}
.notes text {
  font-size: 15px;
  fill: #ed1c24;
}
```
